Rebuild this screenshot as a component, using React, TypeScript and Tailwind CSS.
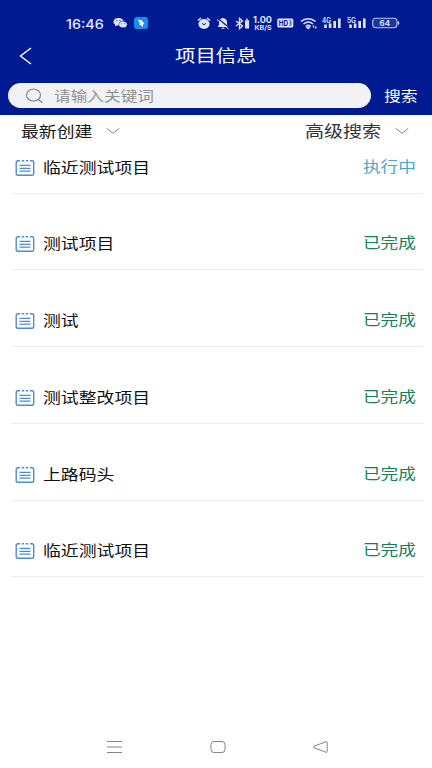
import React from "react";

type Project = { name: string; status: string; done: boolean };

const projects: Project[] = [
  { name: "临近测试项目", status: "执行中", done: false },
  { name: "测试项目", status: "已完成", done: true },
  { name: "测试", status: "已完成", done: true },
  { name: "测试整改项目", status: "已完成", done: true },
  { name: "上路码头", status: "已完成", done: true },
  { name: "临近测试项目", status: "已完成", done: true },
];

function Signal({ label }: { label: string }) {
  return (
    <svg width="20" height="14" viewBox="0 0 20 14" fill="#dfe5ff">
      <text x="0" y="6.5" fontSize="7" fontWeight="600" fontFamily="Inter, sans-serif" textLength="9" lengthAdjust="spacingAndGlyphs">{label}</text>
      <rect x="2.2" y="8.5" width="2.6" height="3.5" />
      <rect x="6.8" y="7.5" width="2.6" height="4.5" />
      <rect x="11.4" y="5" width="2.6" height="7" />
      <rect x="16" y="2.5" width="2.6" height="9.5" />
    </svg>
  );
}

function StatusBar() {
  return (
    <div className="flex h-[35px] items-center pt-[11px] text-[#e6ebff]">
      <span className="ml-[66px] w-[46px] shrink-0 whitespace-nowrap">
        <span className="inline-block origin-left scale-x-[1.1] text-[13px] leading-4 font-medium">16:46</span>
      </span>
      <svg className="ml-px shrink-0" width="15" height="12" viewBox="0 0 15 12">
        <path d="M5.5 1C2.6 1 .5 2.6.5 4.8c0 1.2.7 2.2 1.7 2.9L1.8 9.2l1.9-.8c.6.1 1.2.2 1.8.2 3 0 5-1.7 5-3.8S8.400 1 5.500 1Z" fill="#e6ebff" />
        <path d="M10 4.200c-2.500 0-4.300 1.400-4.300 3.300s1.800 3.300 4.300 3.300l1.400-.2 1.500.7-.3-1.300c1-.600 1.600-1.500 1.600-2.500 0-1.900-1.800-3.300-4.200-3.300Z" fill="#e6ebff" stroke="#001b92" strokeWidth=".6" />
        <g fill="#001b92"><circle cx="3.800" cy="3.700" r=".6" /><circle cx="7" cy="3.700" r=".6" /><circle cx="8.600" cy="6.700" r=".5" /><circle cx="11.300" cy="6.700" r=".5" /></g>
      </svg>
      <svg className="ml-[6px] shrink-0" width="14" height="12" viewBox="0 0 14 12">
        <rect width="14" height="12" rx="3" fill="#168cf0" />
        <path d="M3.500 2.200 6.500 3.500 8 2.800 8.300 4.500 10.300 6.500 9 7.500 8.500 10 6.500 8 5.300 7.800 5.800 6.300Z" fill="#fff" />
      </svg>
      <svg className="ml-[49px] shrink-0" width="14" height="13" viewBox="0 0 14 13">
        <ellipse cx="7" cy="7" rx="5.500" ry="5" fill="#dfe5ff" />
        <path d="M1 3.500 4 1M13 3.500 10 1" stroke="#dfe5ff" strokeWidth="1.600" />
        <path d="M5 6.300 7 7.800 9 6.300" fill="none" stroke="#001b92" strokeWidth="1" />
      </svg>
      <svg className="ml-[5px] shrink-0" width="14" height="13" viewBox="0 0 14 13">
        <path d="M7 1C4.500 1.200 3 3 3 5v3l-1.500 2h11L11 8V5C11 3 9.500 1.200 7 1ZM5.500 10.800h3v1h-3Z" fill="#dfe5ff" />
        <path d="m2 1.500 11 9" stroke="#001b92" strokeWidth="1.200" /><path d="m1 2.500 11.500 9.300" stroke="#dfe5ff" />
      </svg>
      <svg className="ml-[5px] shrink-0" width="15" height="13" viewBox="0 0 15 13" fill="none" stroke="#dfe5ff">
        <path d="m1 4 6.500 5L4.500 11.500V1.500L7.500 4 1 9" strokeWidth="1.300" /><rect x="10.600" y="3.800" width="3" height="7.200" fill="#dfe5ff" /><path d="M11 2.200h2" />
      </svg>
      <svg className="ml-[3px] shrink-0" width="20" height="19" viewBox="0 -2 20 19" fill="#dfe5ff" fontFamily="Inter, sans-serif" fontWeight="700">
        <text x="0" y="7.300" fontSize="9" textLength="19" lengthAdjust="spacingAndGlyphs">1.00</text>
        <text x="1.500" y="14" fontSize="6.500" textLength="17" lengthAdjust="spacingAndGlyphs">KB/S</text>
      </svg>
      <svg className="ml-[4px] shrink-0" width="17" height="12" viewBox="0 0 17 12">
        <rect x=".3" y="1.500" width="16" height="9" rx="1.500" fill="#dfe5ff" />
        <text x="1.800" y="8.700" fontSize="7.500" fontWeight="700" fontFamily="Inter, sans-serif" fill="#001b92" textLength="9.500" lengthAdjust="spacingAndGlyphs">HD</text>
        <path d="M12.300 3.300q1.800 0 1.800 1.300t-1.300 1.200q1.500 0 1.500 1.300t-2 1.300" fill="none" stroke="#001b92" strokeWidth=".8" />
      </svg>
      <svg className="ml-[6px] shrink-0" width="18" height="13" viewBox="0 0 18 13" fill="none" stroke="#dfe5ff" strokeWidth="1.500">
        <path d="M1 4.500C5 .8 11.500.8 15.500 4.500M3.500 7C6.500 4.500 10 4.500 13 7M6 9.300C7.500 8 9 8 10.500 9.300" /><path d="m7 10.300 1.200 1.200 1.200-1.200Z" fill="#dfe5ff" /><path d="M13.500 8.500v2M15.800 9.500v2" strokeWidth="1.400" />
      </svg>
      <div className="ml-[4px] flex gap-[5px]"><Signal label="4G" /><Signal label="5G" /></div>
      <svg className="ml-[5px] shrink-0" width="28" height="12" viewBox="0 0 28 12">
        <rect x=".7" y="1.200" width="24.300" height="9.600" rx="3" fill="#1e369f" stroke="#b9c3ef" strokeWidth="1.100" />
        <path d="M26.500 4.500v3" stroke="#dfe5ff" strokeWidth="1.300" />
        <text x="7.500" y="9" fontSize="8" fontWeight="600" fontFamily="Inter, sans-serif" fill="#e6ebff" textLength="10.500" lengthAdjust="spacingAndGlyphs">64</text>
      </svg>
    </div>
  );
}

function Chevron() {
  return (
    <svg width="14" height="8" viewBox="0 0 14 8" fill="none" stroke="#858585">
      <path d="m.7 1.300 6.300 5 6.300-5" />
    </svg>
  );
}

function ListIcon() {
  return (
    <svg className="shrink-0" width="20" height="18" viewBox="0 0 20 18" fill="none" stroke="#4f8bd0" strokeWidth="1.400">
      <path d="M5 1.800H3Q1.200 1.800 1.200 3.800v10.700Q1.200 16.300 3 16.300h14q1.700 0 1.700-1.800V3.800Q18.700 1.800 17 1.800h-2M6.700 1.800h2.500M10.800 1.800h2.500" />
      <path d="M4.500 6.400h11M4.500 9.300h11M4.500 12.200h11" strokeWidth="1.300" />
    </svg>
  );
}

export default function App() {
  return (
    <div className="flex h-[768px] w-[432px] flex-col overflow-hidden bg-white font-['Inter','Noto_Sans_CJK_SC',sans-serif]">
      <header className="h-[115px] shrink-0 bg-[#001b92] text-white">
        <StatusBar />
        <div className="flex h-[41px] items-center">
          <svg className="ml-[19px]" width="13" height="18" viewBox="0 0 13 18" fill="none" stroke="#fff" strokeWidth="1.400">
            <path d="M12 1 1.500 9 12 17" />
          </svg>
          <h1 className="ml-[143px] origin-left scale-x-[1.2] text-[17px] leading-5">项目信息</h1>
        </div>
        <div className="flex h-[39px] items-center">
          <div className="ml-2 flex h-[25px] w-[363px] items-center rounded-full bg-[#f2f2f4] text-[#929292]">
            <svg className="ml-[17px]" width="19" height="16" viewBox="0 0 19 16" fill="none" stroke="#858585" strokeWidth="1.200">
              <ellipse cx="8.500" cy="7" rx="7" ry="6" /><path d="m13.300 11.500 4 3.300" />
            </svg>
            <span className="ml-[10px] origin-left scale-x-[1.19] text-[14px] leading-5">请输入关键词</span>
          </div>
          <span className="ml-[13px] origin-left scale-x-[1.2] text-[14px] leading-5">搜索</span>
        </div>
      </header>
      <div className="flex h-[34px] shrink-0 items-center justify-between pr-[23px] pb-[2px] pl-[21px]">
        <div className="flex items-center">
          <span className="w-[85px]"><span className="inline-block origin-left scale-x-[1.19] text-[15px] leading-5 text-[#181818]">最新创建</span></span>
          <Chevron />
        </div>
        <div className="flex items-center">
          <span className="w-[90px]"><span className="inline-block origin-left scale-x-[1.19] text-[16px] leading-5 text-[#333]">高级搜索</span></span>
          <Chevron />
        </div>
      </div>
      <main className="flex flex-col">
        {projects.map((project, index) => (
          <div
            key={index}
            className={`mr-[9px] ml-[11px] flex items-end border-b border-[#ededed] pb-[15px] ${index === 0 ? "h-[44.5px]" : "h-[76.75px]"}`}
          >
            <div className="ml-1 flex items-center">
              <ListIcon />
              <span className="ml-2 origin-left scale-x-[1.19] text-[15px] leading-5 text-[#111]">{project.name}</span>
            </div>
            <span
              className={`mr-[7px] mb-px ml-auto origin-right scale-x-[1.18] text-[15px] leading-5 ${project.done ? "text-[#168058]" : "text-[#4ba6d2]"}`}
            >
              {project.status}
            </span>
          </div>
        ))}
      </main>
      <nav className="mt-auto mb-[13px] flex justify-between pr-[103px] pl-[106px]">
        <svg width="17" height="16" viewBox="0 0 17 16" stroke="#858585"><path d="M1 2.500h15M1 8h15M1 13.500h15" /></svg>
        <svg width="16" height="16" viewBox="0 0 16 16" fill="none" stroke="#858585"><rect x="1" y="2.500" width="14" height="11" rx="3" /></svg>
        <svg width="17" height="16" viewBox="0 0 17 16" fill="none" stroke="#858585" strokeLinejoin="round"><path d="M2 7.200 14 2.700Q15.200 2.300 15.200 3.500v9Q15.200 13.700 14 13.200L2 8.800Q.7 8 2 7.200Z" /></svg>
      </nav>
    </div>
  );
}
